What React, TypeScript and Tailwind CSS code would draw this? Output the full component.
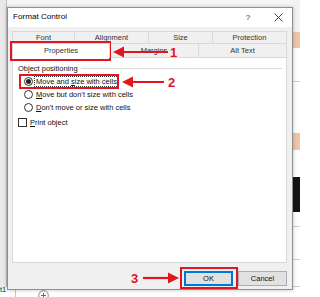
import React from "react";

const RED = "#e2161d";

function Radio({ checked }: { checked?: boolean }) {
  return (
    <span className="flex h-[9px] w-[9px] shrink-0 items-center justify-center rounded-full border border-[#333] bg-white">
      {checked && <span className="h-[5px] w-[5px] rounded-full bg-[#222]" />}
    </span>
  );
}

function Tab({ label, w, active, first }: { label: string; w: string; active?: boolean; first?: boolean }) {
  return (
    <div
      className={`${w} flex items-center justify-center border-t border-r border-[#d9d9d9] ${first ? "border-l" : ""} ${
        active ? "relative z-10 -mb-px bg-white" : "bg-[#f0f0f0]"
      } text-[7.5px] leading-none text-[#333]`}
    >
      {label}
    </div>
  );
}

export default function App() {
  return (
    <div className="relative flex h-[297px] w-[300px] flex-col overflow-hidden bg-[#f4f4f4] font-['Liberation_Sans',Arial,sans-serif]">
      {/* spreadsheet background */}
      <div className="flex flex-1">
        <div className="w-[7px] border-r border-[#bdbdbd] bg-[#e9e9e9]" />
        <div className="flex-1 bg-[#f6f6f6]" />
        <div className="flex w-[7px] flex-col bg-white">
          <div className="h-[32px] bg-[#f3f3f3]" />
          <div className="h-[16px] bg-[#f2c4a6]" />
          <div className="h-[34px] border-b border-[#cfcfcf]" />
          <div className="h-[51px]" />
          <div className="h-[17px] bg-[#f2c4a6]" />
          <div className="h-[27px]" />
          <div className="h-[35px] bg-[#141414]" />
          <div className="h-[15px] border-b border-[#cfcfcf]" />
          <div className="h-[33px] border-b border-[#cfcfcf]" />
          <div className="flex-1 border-b border-[#cfcfcf]" />
        </div>
      </div>
      <div className="flex h-[10px] items-start bg-white">
        <div className="flex w-[8px] justify-start pt-[0px]">
          <span className="text-[6.5px] font-bold leading-none text-[#217346]">t1</span>
        </div>
        <div className="ml-[7px] h-full w-px bg-[#c8c8c8]" />
        <svg className="ml-[22px] mt-[3px]" width="11" height="11" viewBox="0 0 11 11">
          <circle cx="5.5" cy="5.5" r="4.8" fill="none" stroke="#8a8a8a" strokeWidth="1" />
          <path d="M5.5 3V8M3 5.5H8" stroke="#666" strokeWidth="1" />
        </svg>
      </div>

      {/* dialog window */}
      <div className="absolute left-[7px] top-[7px] flex h-[283px] w-[286px] flex-col border border-[#8f8f8f] bg-[#f0f0f0] shadow-[0_0_4px_rgba(0,0,0,0.25)]">
        <div className="flex h-[19px] items-center bg-white pl-[5px] pr-[4px]">
          <span className="text-[8.1px] leading-none text-black">Format Control</span>
          <span className="ml-auto flex w-[20px] justify-center text-[8px] leading-none text-[#333]">?</span>
          <span className="ml-[10px] flex w-[20px] justify-center">
            <svg width="9" height="9" viewBox="0 0 9 9">
              <path d="M0.5 0.5L8.5 8.5M8.5 0.5L0.5 8.5" stroke="#333" strokeWidth="0.9" />
            </svg>
          </span>
        </div>
        <div className="flex flex-1 flex-col pl-[4px] pr-[5px] pt-[4px]">
          <div className="flex h-[12px]">
            <Tab label="Font" w="w-[63px]" first />
            <Tab label="Alignment" w="w-[74px]" />
            <Tab label="Size" w="w-[64px]" />
            <Tab label="Protection" w="w-[74px]" />
          </div>
          <div className="flex h-[14px]">
            <Tab label="Properties" w="w-[98px]" active first />
            <Tab label="Margins" w="w-[89px]" />
            <Tab label="Alt Text" w="w-[88px]" />
          </div>
          <div className="flex h-[206px] flex-col border border-[#d9d9d9] bg-white pl-[5px] pr-[4px] pt-[4px] text-[7.5px] leading-none text-[#111]">
            <div className="flex h-[13px] items-center">
              <span>Object positioning</span>
              <div className="ml-[3px] h-px flex-1 bg-[#dcdcdc]" />
            </div>
            <div className="flex h-[13px] items-center gap-[1px] pl-[6px]">
              <Radio checked />
              <span className="border border-dotted border-[#333] px-[1px] py-[1px]">
                Move and <span className="underline">s</span>ize with cells
              </span>
            </div>
            <div className="flex h-[13px] items-center gap-[1px] pl-[6px]">
              <Radio />
              <span className="px-[2px]">
                <span className="underline">M</span>ove but don't size with cells
              </span>
            </div>
            <div className="flex h-[13px] items-center gap-[1px] pl-[6px]">
              <Radio />
              <span className="px-[2px]">
                <span className="underline">D</span>on't move or size with cells
              </span>
            </div>
            <div className="mt-[2px] flex h-[13px] items-center gap-[3px]">
              <span className="h-[9px] w-[9px] border border-[#333] bg-white" />
              <span>
                <span className="underline">P</span>rint object
              </span>
            </div>
          </div>
          <div className="mt-[8px] flex justify-end gap-[5px]">
            <div className="flex h-[15px] w-[49px] items-center justify-center border border-[#0078d7] bg-[#e1e1e1] text-[7.5px] leading-none text-[#111] shadow-[inset_0_0_0_1px_#0078d7]">
              OK
            </div>
            <div className="flex h-[15px] w-[49px] items-center justify-center border border-[#adadad] bg-[#e1e1e1] text-[7.5px] leading-none text-[#111]">
              Cancel
            </div>
          </div>
        </div>
      </div>

      {/* annotations */}
      <div className="absolute left-[10px] top-[41px] h-[20px] w-[101px] border-2 border-[#e2161d]" />
      <div className="absolute left-[19px] top-[74px] h-[15px] w-[100px] border-2 border-[#e2161d]" />
      <div className="absolute left-[180px] top-[267px] h-[22px] w-[58px] border-2 border-[#e2161d]" />
      <svg className="absolute left-0 top-0" width="300" height="297" viewBox="0 0 300 297">
        <line x1="122" y1="52" x2="168" y2="52" stroke={RED} strokeWidth="2.2" />
        <polygon points="113,52 124,46.5 124,57.5" fill={RED} />
        <line x1="131" y1="82" x2="164" y2="82" stroke={RED} strokeWidth="2.2" />
        <polygon points="122,82 133,76.5 133,87.5" fill={RED} />
        <line x1="143" y1="278" x2="170" y2="278" stroke={RED} strokeWidth="2.2" />
        <polygon points="179,278 168,272.5 168,283.5" fill={RED} />
      </svg>
      <span className="absolute left-[170px] top-[46px] text-[13px] font-bold leading-none text-[#e2161d]">1</span>
      <span className="absolute left-[168px] top-[76px] text-[13px] font-bold leading-none text-[#e2161d]">2</span>
      <span className="absolute left-[131px] top-[272px] text-[13px] font-bold leading-none text-[#e2161d]">3</span>
    </div>
  );
}
